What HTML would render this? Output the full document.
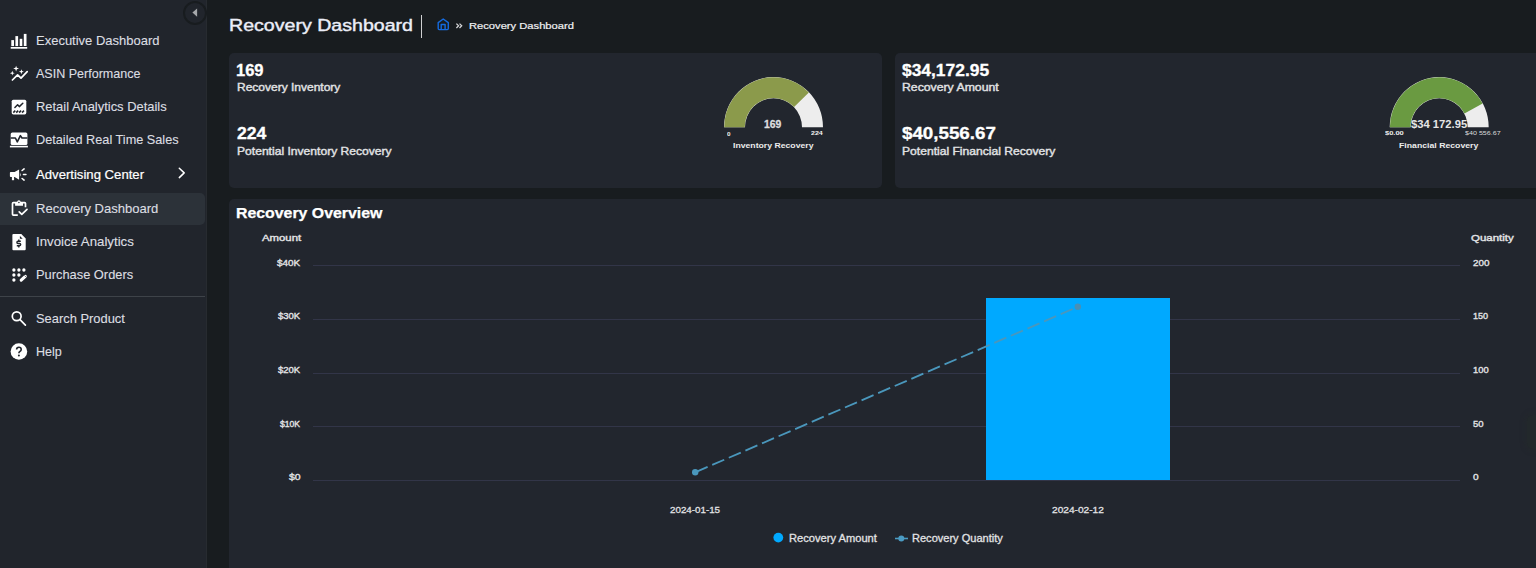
<!DOCTYPE html>
<html>
<head>
<meta charset="utf-8">
<title>Recovery Dashboard</title>
<style>
*{box-sizing:border-box;margin:0;padding:0}
html,body{width:1536px;height:568px;overflow:hidden;background:#181c1f;font-family:"Liberation Sans",sans-serif;color:#fff}
.abs{position:absolute}
.t{position:absolute;white-space:nowrap;line-height:20px;height:20px;transform-origin:0 0}
#sidebar{position:absolute;left:0;top:0;width:207.4px;height:568px;background:#21252c;border-right:1px solid #272b30}
#active{position:absolute;left:0;top:193px;width:205px;height:32px;background:#2c3239;border-radius:0 5px 5px 0}
#divider{position:absolute;left:0;top:296px;width:205px;height:1px;background:#3e4349}
#toggle{position:absolute;left:183px;top:0.6px;width:24px;height:24px;border-radius:50%;border:2px solid #181c1f;background:#21252c}
.card{position:absolute;background:#22262e;border-radius:5px}
svg{position:absolute;left:0;top:0;overflow:visible}
#root{position:absolute;left:0;top:0;width:1536px;height:568px;overflow:hidden}

</style>
</head>
<body>
<div id="root">
<div id="sidebar">
  <div id="active"></div>
  <div id="divider"></div>
  <div id="toggle"></div>
</div>
<div class="abs" style="left:421px;top:15px;width:1px;height:23px;background:#cfd0d2"></div>
<div class="card" style="left:229px;top:53px;width:653px;height:135.2px"></div>
<div class="card" style="left:895px;top:53px;width:660px;height:135.2px"></div>
<div class="card" style="left:229px;top:199px;width:1320px;height:400px"></div>

<div class="abs" id="side-tab" style="left:1527px;top:415px;width:20px;height:34px;border-radius:6px;background:rgba(35,42,42,.55);box-shadow:0 0 5px 2px rgba(35,42,42,.45)"></div>

<svg width="1536" height="568" viewBox="0 0 1536 568">
  <!-- sidebar toggle triangle -->
  <path d="M197.1 8.4 L192.4 12.6 L197.1 16.8 Z" fill="#a6a8ab"/>

  <!-- icon: executive dashboard (bar chart) -->
  <g fill="#fff">
    <rect x="11.3" y="40.1" width="2.7" height="6"/>
    <rect x="15.4" y="36.1" width="2.7" height="10"/>
    <rect x="19.7" y="38.8" width="2.6" height="7.2"/>
    <rect x="23.8" y="33.9" width="2.7" height="12.1"/>
    <rect x="10.7" y="47" width="16.5" height="1.7"/>
  </g>
  <!-- icon: ASIN performance -->
  <g fill="#fff">
    <path d="M16.10 65.70 L16.84 67.86 L19.00 68.60 L16.84 69.34 L16.10 71.50 L15.36 69.34 L13.20 68.60 L15.36 67.86 Z"/>
    <path d="M12.30 70.80 L12.91 72.59 L14.70 73.20 L12.91 73.81 L12.30 75.60 L11.69 73.81 L9.90 73.20 L11.69 72.59 Z"/>
    <path d="M21.40 69.20 L22.04 71.06 L23.90 71.70 L22.04 72.34 L21.40 74.20 L20.76 72.34 L18.90 71.70 L20.76 71.06 Z"/>
  </g>
  <path d="M12.4 80 L17.6 74.8 L21 78.2 L27.2 71.6" fill="none" stroke="#fff" stroke-width="1.7" stroke-linecap="round" stroke-linejoin="round"/>
  <!-- icon: retail analytics details -->
  <rect x="11.7" y="99.7" width="14.6" height="14.7" rx="1.6" fill="#fff"/>
  <path d="M14.9 107.5 L17.6 104.8 L19.3 106.6 L22.8 103.3" fill="none" stroke="#21252c" stroke-width="1.5" stroke-linecap="round" stroke-linejoin="round"/>
  <g stroke="#21252c" stroke-width="1.5" stroke-linecap="butt">
    <path d="M13.3 112.6 L15.3 110.6"/><path d="M16.2 112.6 L18.2 110.6"/><path d="M19.1 112.6 L21.1 110.6"/><path d="M22 112.6 L24 110.6"/>
  </g>
  <!-- icon: detailed real time sales -->
  <rect x="10.7" y="132.4" width="16.7" height="12.6" rx="1.6" fill="#fff"/>
  <rect x="9.9" y="145.8" width="18" height="1.6" fill="#fff"/>
  <path d="M10.7 138 L15.4 138 L17.3 141.8 L20.4 135.6 L22 138 L27.4 138" fill="none" stroke="#21252c" stroke-width="1.6" stroke-linejoin="round"/>
  <!-- icon: advertising center (megaphone) -->
  <g fill="#fff">
    <path d="M10.7 172 L14.6 172 L19.1 169.4 L19.1 179.7 L14.6 177 L10.7 177 Q9.9 177 9.9 176.2 L9.9 172.8 Q9.9 172 10.7 172 Z"/>
    <rect x="11.9" y="176.5" width="2.2" height="3.7"/>
    <path d="M19.9 172.2 Q21.3 174.5 19.9 176.8 Z"/>
  </g>
  <g stroke="#fff" stroke-width="1.6" stroke-linecap="round">
    <path d="M22.1 170.5 L24.1 168.9"/><path d="M23.5 174.5 L25.9 174.5"/><path d="M22.1 178.5 L24.1 180.1"/>
  </g>
  <!-- chevron -->
  <path d="M179.3 168.2 L184.2 172.9 L179.3 177.6" fill="none" stroke="#fff" stroke-width="1.5" stroke-linecap="round" stroke-linejoin="round"/>
  <!-- icon: recovery dashboard (clipboard check) -->
  <g fill="none" stroke="#fff" stroke-width="1.7" stroke-linejoin="round">
    <path d="M17.8 215.1 L13.4 215.1 Q12.5 215.1 12.5 214.2 L12.5 203.6 Q12.5 202.7 13.4 202.7 L24.6 202.7 Q25.5 202.7 25.5 203.6 L25.5 207.3" stroke-linecap="butt"/>
    <path d="M19.2 211.8 L21.8 214.4 L27 209.4" stroke-linecap="round"/>
  </g>
  <path d="M15.1 202.2 L17 202.2 Q17.3 200.3 18.9 200.3 Q20.5 200.3 20.8 202.2 L23 202.2 L23 205.7 L15.1 205.7 Z" fill="#fff"/>
  <circle cx="18.9" cy="202.5" r="0.8" fill="#2c3239"/>
  <!-- icon: invoice analytics -->
  <path d="M13.4 233.9 L21.3 233.9 L25.7 238.4 L25.7 249.2 Q25.7 250.2 24.7 250.2 L13.4 250.2 Q12.4 250.2 12.4 249.2 L12.4 234.9 Q12.4 233.9 13.4 233.9 Z" fill="#fff"/>
  <path d="M19.9 236 L22.7 238.7 L19.9 238.7 Z" fill="#21252c"/>
  <path d="M20.8 241.3 L18 241.3 Q16.9 241.3 16.9 242.4 Q16.9 243.5 18 243.5 L19.6 243.5 Q20.7 243.5 20.7 244.6 Q20.7 245.7 19.6 245.7 L16.8 245.7 M18.8 239.6 L18.8 241.3 M18.8 245.7 L18.8 247.4" fill="none" stroke="#21252c" stroke-width="1.4"/>
  <!-- icon: purchase orders -->
  <g fill="#fff">
    <circle cx="13.9" cy="270" r="1.65"/><circle cx="18.9" cy="270" r="1.65"/><circle cx="23.9" cy="270" r="1.65"/>
    <circle cx="13.9" cy="275" r="1.65"/><circle cx="18.9" cy="275" r="1.65"/>
    <circle cx="13.9" cy="280" r="1.65"/>
  </g>
  <path d="M21.2 280.1 L25.3 276.3" stroke="#fff" stroke-width="3.1" stroke-linecap="round"/>
  <path d="M24.4 275.4 L26.2 277.2" stroke="#21252c" stroke-width="0.6"/>
  <!-- icon: search -->
  <circle cx="16.7" cy="316.3" r="4.4" fill="none" stroke="#fff" stroke-width="1.7"/>
  <path d="M20 319.7 L25.4 325.1" stroke="#fff" stroke-width="1.7" stroke-linecap="round"/>
  <!-- icon: help -->
  <circle cx="18.9" cy="351.5" r="8.3" fill="#fff"/>
  <path d="M16.6 349.6 Q16.6 347.3 18.9 347.3 Q21.2 347.3 21.2 349.4 Q21.2 350.6 20 351.4 Q18.9 352.1 18.9 353.3" fill="none" stroke="#21252c" stroke-width="1.6"/>
  <circle cx="18.9" cy="355.6" r="1" fill="#21252c"/>

  <!-- home icon -->
  <g fill="none" stroke="#146be0" stroke-width="1.4" stroke-linejoin="round">
    <path d="M443.2 19 L448.3 22.6 L448.3 28.6 Q448.3 29.6 447.3 29.6 L439.2 29.6 Q438.2 29.6 438.2 28.6 L438.2 22.6 Z"/>
    <path d="M441.2 29.6 L441.2 24.5 L445.1 24.5 L445.1 29.6"/>
  </g>
  <!-- breadcrumb chevrons -->
  <path d="M456.4 23.6 L458.6 25.8 L456.4 28 M459.5 23.6 L461.7 25.8 L459.5 28" fill="none" stroke="#d6d7d9" stroke-width="1.25"/>

  <!-- gauge 1 -->
  <path d="M724.00 127.35 A49.5 50.300000000000004 0 0 1 823.00 127.35 L802.00 127.35 A28.5 29.1 0 0 0 745.00 127.35 Z" fill="#ededed"/>
  <path d="M724.20 127.35 A49.3 50.1 0 0 1 808.85 92.42 L794.08 106.92 A28.7 29.3 0 0 0 744.80 127.35 Z" fill="#8b9a4b"/>
  <!-- gauge 2 -->
  <path d="M1389.70 127.35 A49.5 50.300000000000004 0 0 1 1488.70 127.35 L1467.70 127.35 A28.5 29.1 0 0 0 1410.70 127.35 Z" fill="#ededed"/>
  <path d="M1389.90 127.35 A49.3 50.1 0 0 1 1482.59 103.57 L1464.46 113.44 A28.7 29.3 0 0 0 1410.50 127.35 Z" fill="#6a9a41"/>

  <!-- chart grid -->
  <g stroke="#323548" stroke-width="1">
    <path d="M313 265.5 H1460"/><path d="M313 319.5 H1460"/><path d="M313 373.5 H1460"/><path d="M313 426.5 H1460"/><path d="M313 480.5 H1460"/>
  </g>
  <rect x="986" y="298" width="184" height="182" fill="#00a9ff"/>
  <path d="M695.2 472.3 L1077.8 306.8" fill="none" stroke="#4a97bc" stroke-width="1.85" stroke-dasharray="13.08 5" stroke-dashoffset="-0.45"/>
  <circle cx="695.2" cy="472.3" r="3.2" fill="#4a97bc"/>
  <circle cx="1077.8" cy="306.8" r="3.2" fill="#4b8fb3"/>
  <!-- legend -->
  <circle cx="778.3" cy="537.6" r="4.9" fill="#00a9ff"/>
  <path d="M895 538.5 H908" stroke="#4b9bc3" stroke-width="1.6"/>
  <circle cx="901.3" cy="538.5" r="3" fill="#4b9bc3"/>
</svg>

<!-- text layer -->
<div class="t" style="left:36.25px;top:30.51px;font-size:12.1px;font-weight:normal;color:#dcdee1;transform:scaleX(1.0746);-webkit-text-stroke:0.12px #dcdee1;">Executive Dashboard</div>
<div class="t" style="left:36.25px;top:63.51px;font-size:12.1px;font-weight:normal;color:#dcdee1;transform:scaleX(1.0362);-webkit-text-stroke:0.12px #dcdee1;">ASIN Performance</div>
<div class="t" style="left:36.25px;top:96.51px;font-size:12.1px;font-weight:normal;color:#dcdee1;transform:scaleX(1.0675);-webkit-text-stroke:0.12px #dcdee1;">Retail Analytics Details</div>
<div class="t" style="left:36.25px;top:130.41px;font-size:12.1px;font-weight:normal;color:#dcdee1;transform:scaleX(1.0500);-webkit-text-stroke:0.12px #dcdee1;">Detailed Real Time Sales</div>
<div class="t" style="left:35.50px;top:165.21px;font-size:12.1px;font-weight:normal;color:#ffffff;transform:scaleX(1.0859);-webkit-text-stroke:0.2px #fff;">Advertising Center</div>
<div class="t" style="left:36.25px;top:199.41px;font-size:12.1px;font-weight:normal;color:#dcdee1;transform:scaleX(1.0768);-webkit-text-stroke:0.12px #dcdee1;">Recovery Dashboard</div>
<div class="t" style="left:36.11px;top:231.51px;font-size:12.1px;font-weight:normal;color:#dcdee1;transform:scaleX(1.0941);-webkit-text-stroke:0.12px #dcdee1;">Invoice Analytics</div>
<div class="t" style="left:36.30px;top:265.41px;font-size:12.1px;font-weight:normal;color:#dcdee1;transform:scaleX(1.0628);-webkit-text-stroke:0.12px #dcdee1;">Purchase Orders</div>
<div class="t" style="left:36.30px;top:309.31px;font-size:12.1px;font-weight:normal;color:#dcdee1;transform:scaleX(1.0655);-webkit-text-stroke:0.12px #dcdee1;">Search Product</div>
<div class="t" style="left:36.30px;top:342.11px;font-size:12.1px;font-weight:normal;color:#dcdee1;transform:scaleX(1.0379);-webkit-text-stroke:0.12px #dcdee1;">Help</div>
<div class="t" style="left:228.55px;top:15.25px;font-size:16.3px;font-weight:normal;color:#eceef8;transform:scaleX(1.2029);-webkit-text-stroke:0.4px #eceef8;">Recovery Dashboard</div>
<div class="t" style="left:469.20px;top:15.50px;font-size:9.8px;font-weight:normal;color:#f0f1f3;transform:scaleX(1.1400);-webkit-text-stroke:0.2px #f0f1f3;">Recovery Dashboard</div>
<div class="t" style="left:235.67px;top:61.16px;font-size:16.0px;font-weight:bold;color:#fff;transform:scaleX(1.0311);-webkit-text-stroke:0.3px #fff;">169</div>
<div class="t" style="left:236.70px;top:78.20px;font-size:10.4px;font-weight:normal;color:#e1e2e4;transform:scaleX(1.1548);-webkit-text-stroke:0.38px #e1e2e4;">Recovery Inventory</div>
<div class="t" style="left:236.70px;top:123.76px;font-size:16.0px;font-weight:bold;color:#fff;transform:scaleX(1.1009);-webkit-text-stroke:0.3px #fff;">224</div>
<div class="t" style="left:236.70px;top:141.60px;font-size:10.4px;font-weight:normal;color:#e1e2e4;transform:scaleX(1.1643);-webkit-text-stroke:0.38px #e1e2e4;">Potential Inventory Recovery</div>
<div class="t" style="left:902.10px;top:61.16px;font-size:16.0px;font-weight:bold;color:#fff;transform:scaleX(1.0876);-webkit-text-stroke:0.3px #fff;">$34,172.95</div>
<div class="t" style="left:902.10px;top:78.20px;font-size:10.4px;font-weight:normal;color:#e1e2e4;transform:scaleX(1.1790);-webkit-text-stroke:0.38px #e1e2e4;">Recovery Amount</div>
<div class="t" style="left:902.10px;top:123.76px;font-size:16.0px;font-weight:bold;color:#fff;transform:scaleX(1.1724);-webkit-text-stroke:0.3px #fff;">$40,556.67</div>
<div class="t" style="left:902.10px;top:141.60px;font-size:10.4px;font-weight:normal;color:#e1e2e4;transform:scaleX(1.1647);-webkit-text-stroke:0.38px #e1e2e4;">Potential Financial Recovery</div>
<div class="t" style="left:763.90px;top:114.77px;font-size:10.2px;font-weight:bold;color:#dcdddf;transform:scaleX(1.0213);-webkit-text-stroke:0.3px #dcdddf;">169</div>
<div class="t" style="left:727.20px;top:124.42px;font-size:6px;font-weight:bold;color:#f2f2f2;transform:scaleX(1.0500);">0</div>
<div class="t" style="left:810.90px;top:123.42px;font-size:6px;font-weight:bold;color:#f2f2f2;transform:scaleX(1.1711);">224</div>
<div class="t" style="left:732.60px;top:136.23px;font-size:8.0px;font-weight:bold;color:#ececec;transform:scaleX(1.0842);">Inventory Recovery</div>
<div class="t" style="left:1410.60px;top:113.79px;font-size:11.0px;font-weight:bold;color:#e6e6e6;transform:scaleX(1.0212);">$34 172.95</div>
<div class="t" style="left:1385.00px;top:123.42px;font-size:6px;font-weight:bold;color:#f2f2f2;transform:scaleX(1.2502);">$0.00</div>
<div class="t" style="left:1464.80px;top:123.42px;font-size:6px;font-weight:normal;color:#dadbdd;transform:scaleX(1.1892);">$40 556.67</div>
<div class="t" style="left:1398.80px;top:136.23px;font-size:8.0px;font-weight:bold;color:#ececec;transform:scaleX(1.0875);">Financial Recovery</div>
<div class="t" style="left:236.10px;top:202.85px;font-size:14.3px;font-weight:bold;color:#fff;transform:scaleX(1.1091);-webkit-text-stroke:0.25px #fff;">Recovery Overview</div>
<div class="t" style="left:262.30px;top:228.24px;font-size:9.7px;font-weight:normal;color:#e2e3e5;transform:scaleX(1.1723);-webkit-text-stroke:0.4px #e2e3e5;">Amount</div>
<div class="t" style="left:1471.00px;top:228.44px;font-size:9.7px;font-weight:normal;color:#e2e3e5;transform:scaleX(1.1812);-webkit-text-stroke:0.4px #e2e3e5;">Quantity</div>
<div class="t" style="left:277.30px;top:253.08px;font-size:9.0px;font-weight:normal;color:#e2e3e5;transform:scaleX(1.0992);-webkit-text-stroke:0.36px #e2e3e5;">$40K</div>
<div class="t" style="left:278.20px;top:305.75px;font-size:9.0px;font-weight:normal;color:#e2e3e5;transform:scaleX(1.0563);-webkit-text-stroke:0.36px #e2e3e5;">$30K</div>
<div class="t" style="left:278.20px;top:360.42px;font-size:9.0px;font-weight:normal;color:#e2e3e5;transform:scaleX(1.0563);-webkit-text-stroke:0.36px #e2e3e5;">$20K</div>
<div class="t" style="left:280.30px;top:414.09px;font-size:9.0px;font-weight:normal;color:#e2e3e5;transform:scaleX(0.9564);-webkit-text-stroke:0.36px #e2e3e5;">$10K</div>
<div class="t" style="left:288.80px;top:466.76px;font-size:9.0px;font-weight:normal;color:#e2e3e5;transform:scaleX(1.1594);-webkit-text-stroke:0.36px #e2e3e5;">$0</div>
<div class="t" style="left:1472.60px;top:253.18px;font-size:9.0px;font-weight:normal;color:#e2e3e5;transform:scaleX(1.0926);-webkit-text-stroke:0.36px #e2e3e5;">200</div>
<div class="t" style="left:1472.60px;top:305.85px;font-size:9.0px;font-weight:normal;color:#e2e3e5;transform:scaleX(1.0059);-webkit-text-stroke:0.36px #e2e3e5;">150</div>
<div class="t" style="left:1472.60px;top:359.52px;font-size:9.0px;font-weight:normal;color:#e2e3e5;transform:scaleX(1.0393);-webkit-text-stroke:0.36px #e2e3e5;">100</div>
<div class="t" style="left:1472.60px;top:414.19px;font-size:9.0px;font-weight:normal;color:#e2e3e5;transform:scaleX(1.0594);-webkit-text-stroke:0.36px #e2e3e5;">50</div>
<div class="t" style="left:1472.60px;top:466.86px;font-size:9.0px;font-weight:normal;color:#e2e3e5;transform:scaleX(1.1200);-webkit-text-stroke:0.36px #e2e3e5;">0</div>
<div class="t" style="left:670.20px;top:500.04px;font-size:9.4px;font-weight:normal;color:#e2e3e5;transform:scaleX(1.0431);-webkit-text-stroke:0.28px #e2e3e5;">2024-01-15</div>
<div class="t" style="left:1051.90px;top:500.14px;font-size:9.4px;font-weight:normal;color:#e2e3e5;transform:scaleX(1.0808);-webkit-text-stroke:0.28px #e2e3e5;">2024-02-12</div>
<div class="t" style="left:789.20px;top:528.36px;font-size:10.5px;font-weight:normal;color:#e2e3e5;transform:scaleX(1.0606);-webkit-text-stroke:0.28px #e2e3e5;">Recovery Amount</div>
<div class="t" style="left:912.30px;top:528.36px;font-size:10.5px;font-weight:normal;color:#e2e3e5;transform:scaleX(1.0514);-webkit-text-stroke:0.28px #e2e3e5;">Recovery Quantity</div>
</div>
</body>
</html>
